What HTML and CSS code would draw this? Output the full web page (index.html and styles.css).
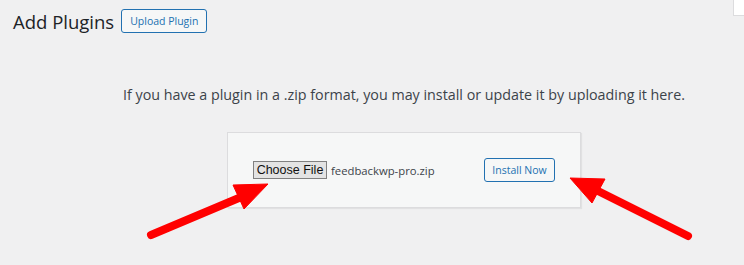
FILE: index.html
```html
<!DOCTYPE html>
<html lang="en">
<head>
    <meta charset="UTF-8">
    <title>Add Plugins</title>
    <link rel="stylesheet" href="styles.css">
</head>
<body>
<div class="wrap">
    <header class="kopf">
        <h1>Add Plugins</h1>
        <button class="btn_upload">Upload Plugin</button>
        <div class="tab_rechts"></div>
    </header>

    <div class="upload_bereich">
        <p class="info">If you have a plugin in a .zip format, you may install or update it by uploading it here.</p>
        <form class="upload_form">
            <div class="datei">
                <span class="btn_datei">Choose File</span>
                <span class="datei_name">feedbackwp-pro.zip</span>
            </div>
            <button type="button" class="btn_install">Install Now</button>
        </form>
    </div>

    <!-- Pfeile -->
    <svg class="pfeile" width="744" height="265" viewBox="0 0 744 265">
        <g fill="#ff0000" stroke="#ff0000">
            <line x1="151" y1="235" x2="246" y2="195" stroke-width="8" stroke-linecap="round"/>
            <polygon points="268,184 233,185 244,209" stroke-width="1"/>
            <line x1="688" y1="236" x2="596" y2="190" stroke-width="8" stroke-linecap="round"/>
            <polygon points="570,178 605,179 592,203" stroke-width="1"/>
        </g>
    </svg>
</div>
</body>
</html>
```

FILE: styles.css
```css
/*allgemein*/
body{
    margin: 0;
    background-color: #f0f0f1;
    font-family: "Open Sans", sans-serif;
    color: #3c434a;
}
.wrap{
    position: relative;
    width: 744px;
    height: 265px;
    overflow: hidden;
}

/*kopf*/
.kopf{
    display: flex;
    align-items: flex-start;
}
h1{
    font-size: 18.5px;
    font-weight: 400;
    color: #1d2327;
    margin: 7px 0 0 13px;
    line-height: 29px;
}
.btn_upload{
    box-sizing: border-box;
    margin: 9px 0 0 7px;
    height: 24px;
    padding: 0 8px;
    font-family: "Open Sans", sans-serif;
    font-size: 10.5px;
    color: #2271b1;
    background-color: #f6f7f7;
    border: 1px solid #2271b1;
    border-radius: 3px;
}
.tab_rechts{
    margin-left: auto;
    margin-right: -1px;
    width: 11px;
    height: 15px;
    background-color: #fff;
    border-left: 1px solid #dcdcde;
    border-bottom: 1px solid #dcdcde;
}

/*upload*/
.upload_bereich{
    margin-left: 64px;
    text-align: center;
}
.info{
    margin: 49px 0 0 0;
    font-size: 14.3px;
    line-height: 20px;
}
.upload_form{
    display: flex;
    justify-content: space-between;
    align-items: center;
    box-sizing: border-box;
    width: 354px;
    height: 76px;
    margin: 27px auto 0 auto;
    padding: 0 25px 0 25px;
    background-color: #f6f7f7;
    border: 1px solid #dcdcde;
    box-shadow: 1px 1px 1px rgba(0,0,0,0.06);
}
.datei{
    display: flex;
    align-items: center;
}
.btn_datei{
    box-sizing: border-box;
    width: 74px;
    height: 18px;
    line-height: 16px;
    font-family: "Liberation Sans", Arial, sans-serif;
    font-size: 12.5px;
    color: #111;
    background-color: #e3e3e3;
    border: 1px solid #808080;
}
.datei_name{
    margin-left: 4px;
    font-size: 11.3px;
    color: #3c434a;
}
.btn_install{
    box-sizing: border-box;
    width: 71px;
    height: 24px;
    padding: 0;
    font-family: "Open Sans", sans-serif;
    font-size: 10.5px;
    color: #2271b1;
    background-color: #f6f7f7;
    border: 1px solid #2271b1;
    border-radius: 3px;
}

/*pfeile*/
.pfeile{
    position: absolute;
    left: 0;
    top: 0;
}
```
